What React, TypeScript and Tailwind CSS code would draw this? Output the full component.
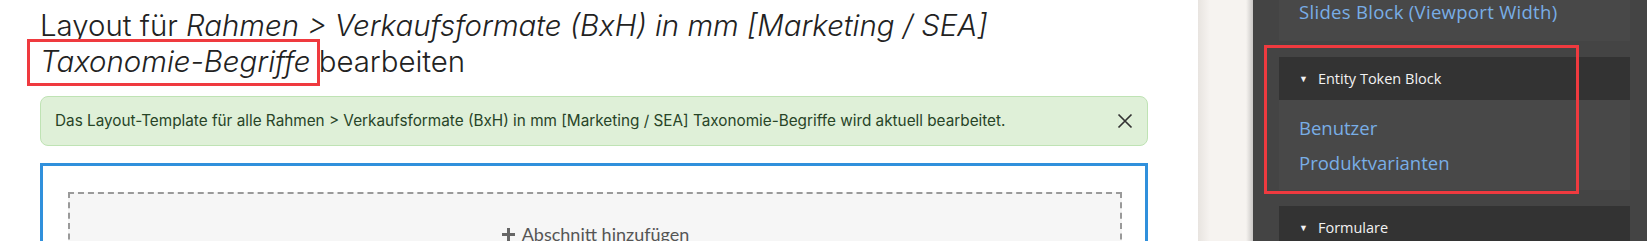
import React from 'react';

const headingFont = { fontFamily: 'Inter, Lato, "Noto Sans", sans-serif' };
const addFont = { fontFamily: 'Lato, "Noto Sans", sans-serif' };
const panelFont = { fontFamily: '"Open Sans", "Noto Sans", sans-serif' };

const BlockHeader: React.FC<{ label: string }> = ({ label }) => (
  <div className="flex h-[43px] items-center bg-[#333333] pl-[20px] text-[14.5px] leading-[43px] text-[#f2f2f2]">
    <span className="mr-[10px] text-[9px]">▼</span>
    <span>{label}</span>
  </div>
);

const BlockLink: React.FC<{ label: string; wide?: boolean }> = ({ label, wide }) => (
  <a
    href="#"
    className={
      wide
        ? 'block pl-[20px] text-[18.5px] leading-[35px] tracking-[0.3px] text-[#79aee6]'
        : 'block pl-[20px] text-[18.5px] leading-[35px] text-[#79aee6]'
    }
  >
    {label}
  </a>
);

export default function App() {
  return (
    <div className="flex h-[241px] w-[1647px] overflow-hidden bg-white">
      <main className="w-[1198px] shrink-0 pl-[40px] pr-[50px]" style={headingFont}>
        <h1 className="pt-[8px] text-[29.4px] leading-[36px] font-light text-[#222222]">
          Layout für <em>Rahmen &gt; Verkaufsformate (BxH) in mm [Marketing / SEA]</em>{' '}
          <span className="relative whitespace-nowrap">
            <em>Taxonomie-Begriffe</em>
            <span className="pointer-events-none absolute -top-[5px] -bottom-[7px] -left-[13px] -right-[10px] border-[3px] border-[#ef3a3f]" />
          </span>{' '}
          bearbeiten
        </h1>

        <div className="mt-[16px] flex h-[50px] items-center justify-between rounded-[8px] border border-[#bfe3b4] bg-[#dff0d8] pl-[14px] pr-[14px] text-[15.3px] text-[#274427]">
          <span>
            Das Layout-Template für alle Rahmen &gt; Verkaufsformate (BxH) in mm [Marketing / SEA] Taxonomie-Begriffe wird aktuell bearbeitet.
          </span>
          <svg width="16" height="16" viewBox="0 0 16 16" className="shrink-0">
            <path d="M1.5 1.5 L14.5 14.5 M14.5 1.5 L1.5 14.5" stroke="#333333" strokeWidth="1.7" fill="none" />
          </svg>
        </div>

        <div className="mt-[17px] border-[3px] border-[#3090dc] pt-[26px] pl-[25px] pr-[23px]">
          <div className="h-[120px] border-2 border-dashed border-[#9a9a9a] bg-[#f6f6f6] pt-[28px]" style={addFont}>
            <div className="flex items-center justify-center gap-[6px] text-[18px] leading-[24px] text-[#555555]">
              <svg width="15" height="15" viewBox="0 0 15 15">
                <path d="M7.5 1 V14 M1 7.5 H14" stroke="#666666" strokeWidth="3" fill="none" />
              </svg>
              <span>Abschnitt hinzufügen</span>
            </div>
          </div>
        </div>
      </main>

      <div className="w-[55px] shrink-0 bg-[linear-gradient(to_right,#e8e4e0,#f6f3f0_12px,#f6f3f0_calc(100%-7px),#c9c7c5)]" />

      <aside className="relative flex-1 bg-[#444444] pl-[26px] pr-[17px]" style={panelFont}>
        <div className="h-[41px] overflow-hidden bg-[#484848]">
          <div className="-mt-[6px]">
            <BlockLink label="Slides Block (Viewport Width)" wide />
          </div>
        </div>

        <div className="mt-[16px]">
          <BlockHeader label="Entity Token Block" />
          <div className="bg-[#484848] pt-[10px] pb-[10px]">
            <BlockLink label="Benutzer" />
            <BlockLink label="Produktvarianten" />
          </div>
        </div>

        <div className="mt-[16px]">
          <BlockHeader label="Formulare" />
        </div>

        <div className="pointer-events-none absolute top-[45px] left-[11px] h-[149px] w-[315px] border-[3px] border-[#ef3a3f]" />
      </aside>
    </div>
  );
}
